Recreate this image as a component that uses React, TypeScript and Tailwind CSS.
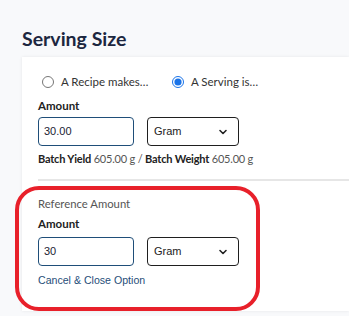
import { ChevronDown } from 'lucide-react';

const sans = { fontFamily: '"Lato", "Noto Sans", sans-serif' };

function UnitSelect() {
  return (
    <div className="w-[92px] h-[29px] border border-[#1f1f1f] rounded-[4px] flex items-center justify-between pl-[6px] pr-[9px] text-[11px] text-[#222] font-['Liberation_Sans',Arial,sans-serif]">
      <span>Gram</span>
      <ChevronDown className="w-[12px] h-[12px]" strokeWidth={3.2} />
    </div>
  );
}

function AmountInput({ value }: { value: string }) {
  return (
    <div className="w-[96px] h-[29px] border-[1.5px] border-[#1f4e79] rounded-[4px] flex items-center pl-[5px] text-[11px] text-[#1a2233] font-['Liberation_Sans',Arial,sans-serif]">
      {value}
    </div>
  );
}

export default function App() {
  return (
    <div className="w-[349px] h-[316px] overflow-hidden bg-[#f8f9fb] pl-[22px] pt-[25px]" style={sans}>
      <h1 className="text-[19.5px] leading-[28px] font-bold text-[#1c2740]">Serving Size</h1>
      <div className="mt-[4px] bg-white shadow-[0_0_3px_rgba(0,0,0,0.08)] h-[254px] pl-[16px] pt-[17px]">
        <div className="flex items-center h-[16px] text-[11.5px] text-[#333]">
          <label className="flex items-center gap-[7px] w-[134px] pl-[4px]">
            <input type="radio" name="srv" className="w-[12px] h-[12px] m-0 accent-[#1a73e8]" />
            A Recipe makes…
          </label>
          <label className="flex items-center gap-[7px]">
            <input type="radio" name="srv" defaultChecked className="w-[12px] h-[12px] m-0 accent-[#1a73e8]" />
            A Serving is…
          </label>
        </div>

        <div className="mt-[8px] text-[11.5px] font-bold text-[#222] leading-[16px]">Amount</div>
        <div className="mt-[3px] flex gap-[13px]">
          <AmountInput value="30.00" />
          <UnitSelect />
        </div>
        <div className="mt-[5px] text-[11px] leading-[16px] tracking-[-0.2px] text-[#555]">
          <span className="font-bold text-[#222]">Batch Yield</span> 605.00 g / <span className="font-bold text-[#222]">Batch Weight</span> 605.00 g
        </div>

        <div className="mt-[12px] h-[2px] bg-[#e6e6e6]" />

        <div className="mt-[5px] -ml-[23px] w-[245px] h-[125px] border-4 border-[#e8202a] rounded-[24px] pl-[19px] pt-[6px]">
          <div className="text-[11.3px] leading-[16px] text-[#555]">Reference Amount</div>
          <div className="mt-[4px] text-[11.5px] font-bold text-[#222] leading-[16px]">Amount</div>
          <div className="mt-[5px] flex gap-[13px]">
            <AmountInput value="30" />
            <UnitSelect />
          </div>
          <div className="mt-[6px] text-[10.6px] leading-[16px] text-[#1f4e79] font-['Liberation_Sans',Arial,sans-serif]">
            Cancel &amp; Close Option
          </div>
        </div>
      </div>
    </div>
  );
}
